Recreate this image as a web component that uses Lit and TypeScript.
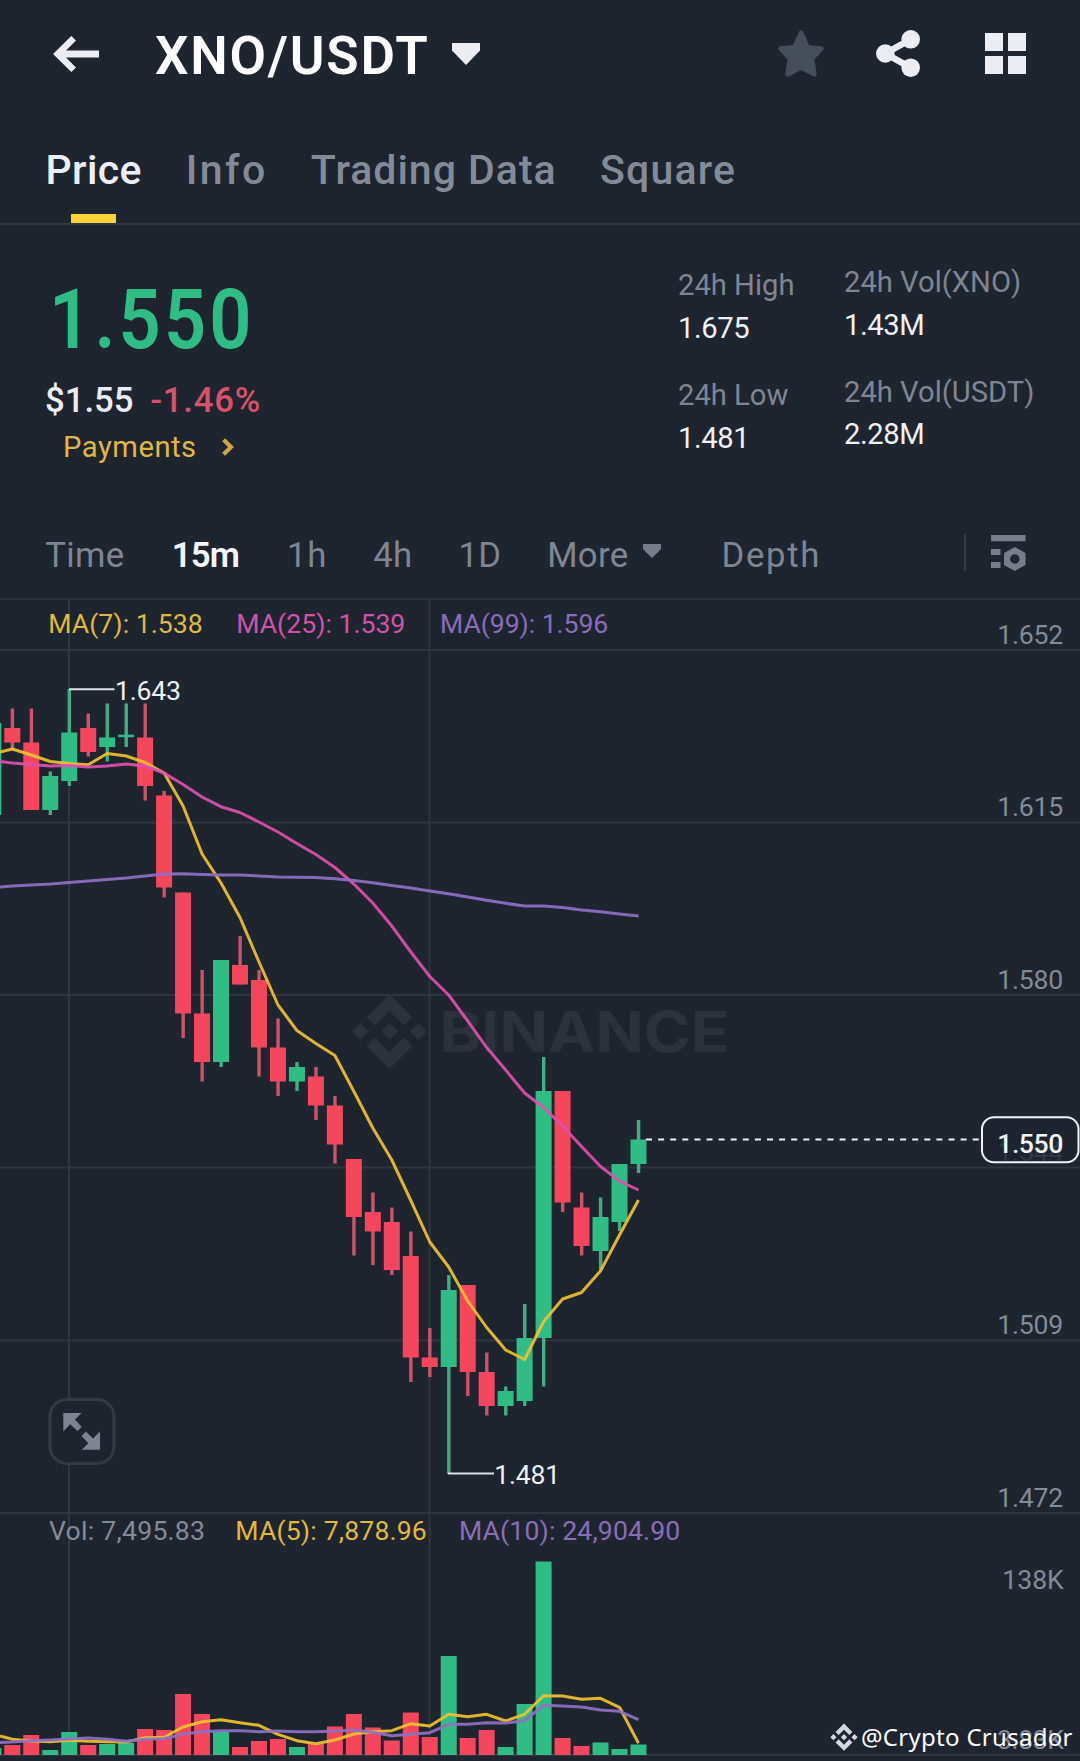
import { LitElement, html, svg, css } from "lit";
import { customElement } from "lit/decorators.js";
import { classMap } from "lit/directives/class-map.js";

const TOP = 600;
const BOTTOM = 1755;
const STEP = 18.975;
const centerX = (i: number) => 12.3 + STEP * i;

type Candle = {
  up: boolean;
  open: number;
  close: number;
  high: number;
  low: number;
  vol: number;
};

const c = (dir: string, top: number, bottom: number, high: number, low: number, vol: number): Candle => ({
  up: dir === "u",
  open: top,
  close: bottom,
  high,
  low,
  vol,
});

/* The first candle is cut off by the left edge (index -1). */
const CANDLES: Candle[] = [
  c("u", 723, 815, 723, 815, 1748),
  c("d", 728, 742.5, 708.5, 749, 1745),
  c("d", 742.5, 810, 708.5, 810, 1735),
  c("u", 776, 810, 771.5, 815, 1750),
  c("u", 732.5, 781, 689, 786, 1732),
  c("d", 728, 752, 713.5, 756.5, 1745),
  c("u", 737.5, 747, 703.5, 761.5, 1744),
  c("u", 734.7, 737.2, 703.5, 747, 1743),
  c("d", 737.5, 786, 703.5, 800.5, 1729),
  c("d", 795.5, 887.5, 791, 897.5, 1730),
  c("d", 892.5, 1013.5, 892.5, 1038, 1694),
  c("d", 1013.5, 1062, 970, 1081.5, 1714),
  c("u", 960, 1062, 960, 1067, 1731.5),
  c("d", 965, 984.5, 936, 984.5, 1747),
  c("d", 980, 1047.5, 970, 1076.5, 1741),
  c("d", 1047.5, 1081.5, 1018.5, 1096, 1739),
  c("u", 1067, 1081.5, 1062, 1091, 1747),
  c("d", 1076.5, 1105.5, 1067, 1120, 1744),
  c("d", 1105.5, 1144.5, 1096, 1163.5, 1726.5),
  c("d", 1159, 1217, 1159, 1255.5, 1714),
  c("d", 1212, 1231.5, 1192.5, 1265, 1727.5),
  c("d", 1222, 1270, 1207.5, 1275, 1740.5),
  c("d", 1256, 1357.5, 1231.5, 1382, 1712.5),
  c("d", 1357.5, 1367, 1328, 1377, 1737),
  c("u", 1290, 1367, 1275, 1474, 1656),
  c("d", 1285, 1372, 1285, 1396, 1738),
  c("d", 1372, 1406, 1352.5, 1415.5, 1730),
  c("u", 1391, 1406, 1386.5, 1415.5, 1747),
  c("u", 1338, 1401, 1304, 1406, 1704),
  c("u", 1091, 1338, 1057, 1386.5, 1561.5),
  c("d", 1091, 1202.5, 1091, 1212, 1738),
  c("d", 1207.5, 1246, 1192.5, 1255.5, 1746),
  c("u", 1217, 1251, 1197.5, 1270, 1742.5),
  c("u", 1164, 1222, 1164, 1231, 1749),
  c("u", 1139.5, 1164, 1120, 1173, 1744.5),
];

const MA7 = [
  749, 755, 761.5, 763.5, 764.7, 753.5, 756, 762.5, 773, 806, 854, 883, 917.5, 962, 1005, 1030.5, 1043.5, 1055.5,
  1091.5, 1128, 1160, 1200.5, 1242, 1267, 1301, 1327.5, 1350, 1359.5, 1321.5, 1299, 1292.5, 1271, 1235, 1200,
];
const MA25 = [
  763, 764.5, 766, 765.5, 767, 766, 764, 766, 773, 784.5, 797, 806.7, 812.5, 822, 832, 843.5, 854.5, 867.5, 884, 903,
  926, 952, 976.5, 995, 1021, 1047.5, 1070, 1093, 1107.5, 1126, 1146.5, 1166.5, 1181, 1190,
];
const MA99 = [
  886, 885, 884, 882.5, 881, 879.5, 878, 876, 874, 873.7, 874.5, 875, 875, 876, 877, 877.3, 877.5, 878.7, 880.5, 882.8,
  885.5, 888, 891, 893.8, 897, 900.3, 903.3, 906, 906, 907.5, 910, 911.8, 914, 916,
];
const VOL_MA5 = [
  598, 603, 605, 601, 604, 605, 606, 593, 592, 561, 545, 539, 548, 556, 583, 602, 611, 600, 582, 575, 572, 551, 558,
  523, 530, 523, 543, 523, 467, 468, 478, 475, 502, 610,
].map((v) => 1540 + v / 3);
const VOL_MA10 = [
  606, 602, 600, 597, 594, 598, 604, 598, 596, 582, 575, 572, 572, 575, 573, 575, 575, 573, 570, 577, 587, 583, 578,
  553, 553, 548, 549, 542, 496, 498, 501, 510, 514, 539,
].map((v) => 1540 + v / 3);

const line = (first: number, ys: number[]) => `0,${first} ` + ys.map((y, i) => `${centerX(i).toFixed(1)},${y.toFixed(1)}`).join(" ");

const LOGO =
  "M38.73 53.2l24.59-24.58 24.6 24.6 14.3-14.31L63.32 0 24.42 38.9zM0 63.31l14.3-14.31 14.31 14.31-14.31 14.3zM38.73 73.41l24.59 24.59 24.6-24.6 14.31 14.29-38.91 38.92-38.9-38.89zM98 63.31l14.3-14.31 14.31 14.31-14.31 14.31zM77.83 63.3L63.32 48.79 48.81 63.3 63.32 77.81z";

const label = (cls: string, x: number, y: number, length: number, text: string) =>
  svg`<text class=${cls} x=${x} y=${y} textLength=${length}>${text}</text>`;

@customElement("price-chart")
export class PriceChart extends LitElement {
  static styles = css`
    :host { display: block; }
    svg { display: block; width: 100%; height: 1161px; overflow: hidden; }
    text { font-family: Roboto, "Liberation Sans", sans-serif; font-size: 26.6px; white-space: pre; }
    .grid { stroke: #2f3641; stroke-width: 2; }
    .up { fill: #2fbd85; }
    .down { fill: #f6465d; }
    .wick-up { fill: #43ad82; }
    .wick-down { fill: #cd526a; }
    .ma { fill: none; stroke-width: 3; stroke-linejoin: round; opacity: 0.92; }
    .stroke-yellow { stroke: #eec12f; }
    .stroke-pink { stroke: #e04fae; }
    .stroke-purple { stroke: #8f70c4; }
    .yellow { fill: #dfb940; }
    .pink { fill: #cf54a9; }
    .purple { fill: #8a6db8; }
    .muted { fill: #848a96; }
    .light { fill: #eef0f5; }
    .callout { stroke: #dcdfe6; stroke-width: 2; }
    .dash { stroke: #eef0f5; stroke-width: 2; stroke-dasharray: 6 6.1; }
    .mark { fill: #2b323c; }
    .brand { font-family: Inter, sans-serif; font-size: 56.8px; font-weight: 700; fill: #2b323c; }
    .tag { fill: #1f252f; fill-opacity: 0.82; stroke: #f1f2f6; stroke-width: 2; }
    .current { font-weight: 500; fill: #f4f5f9; }
    .expand { fill: #1f252f; stroke: #343a45; stroke-width: 3; }
    .arrows { fill: #7d8492; }
    .credit { font-family: "Noto Sans", sans-serif; font-size: 24px; font-weight: 450; fill: #ffffff; }
    .credit-logo { fill: #d5d8de; }
  `;

  render() {
    return svg`
      <svg viewBox="0 ${TOP} 1080 1161" preserveAspectRatio="none">
        ${[650, 822.5, 995, 1167.5, 1340.5, 1513, BOTTOM].map(
          (y) => svg`<line class="grid" x1="0" x2="1080" y1=${y} y2=${y}></line>`
        )}
        ${[69, 429.5].map((x) => svg`<line class="grid" x1=${x} x2=${x} y1=${TOP} y2=${BOTTOM}></line>`)}

        <path class="mark" transform="translate(352 994) scale(0.592)" d=${LOGO}></path>
        <text class="brand" x="439.5" y="1052" textLength="290" lengthAdjust="spacingAndGlyphs">BINANCE</text>

        ${CANDLES.map((k, n) => {
          const x = centerX(n - 1);
          return svg`
            <rect class=${k.up ? "wick-up" : "wick-down"} x=${x - 1.6} y=${k.high} width="3.4" height=${k.low - k.high}></rect>
            <rect class=${k.up ? "up" : "down"} x=${x - 8} y=${k.open} width="16" height=${k.close - k.open}></rect>
            <rect class=${k.up ? "up" : "down"} x=${x - 8} y=${k.vol} width="16" height=${BOTTOM - k.vol}></rect>`;
        })}

        <polyline class="ma stroke-yellow" points=${line(752, MA7)}></polyline>
        <polyline class="ma stroke-pink" points=${line(761.5, MA25)}></polyline>
        <polyline class="ma stroke-purple" points=${line(887, MA99)}></polyline>
        <polyline class="ma stroke-yellow" points=${line(1736, VOL_MA5)}></polyline>
        <polyline class="ma stroke-purple" points=${line(1742.5, VOL_MA10)}></polyline>

        ${label("yellow", 48.3, 633, 154.5, "MA(7): 1.538")}
        ${label("pink", 236.3, 633, 169, "MA(25): 1.539")}
        ${label("purple", 440, 633, 168.3, "MA(99): 1.596")}
        ${label("muted", 49, 1540, 156, "Vol: 7,495.83")}
        ${label("yellow", 235.3, 1540, 191.5, "MA(5): 7,878.96")}
        ${label("purple", 459, 1540, 221.3, "MA(10): 24,904.90")}

        ${label("muted", 997.3, 643.8, 66, "1.652")}
        ${label("muted", 997.3, 816, 66, "1.615")}
        ${label("muted", 997.3, 988.8, 66, "1.580")}
        ${label("muted", 997.3, 1161.3, 66, "1.544")}
        ${label("muted", 997.3, 1334, 66, "1.509")}
        ${label("muted", 997.3, 1506.5, 66, "1.472")}
        ${label("muted", 1002.3, 1589, 61.5, "138K")}
        ${label("muted", 997, 1748.5, 67, "3.83K")}

        <line class="callout" x1="69" x2="114.5" y1="689.3" y2="689.3"></line>
        ${label("light", 115, 699.8, 66, "1.643")}
        <line class="callout" x1="448" x2="494" y1="1473.5" y2="1473.5"></line>
        ${label("light", 494.3, 1484, 66, "1.481")}

        <line class="dash" x1="646" x2="981" y1="1139.5" y2="1139.5"></line>
        <rect class="tag" x="982" y="1117.3" width="96.5" height="45" rx="12"></rect>
        ${label("current", 997.3, 1153, 66, "1.550")}

        <rect class="expand" x="50" y="1399.5" width="64" height="64" rx="17"></rect>
        <path class="arrows" d="M63.3 1413H81.5L75 1419.5L81.7 1427L77.5 1431L70.2 1424.3L63.3 1431.5ZM100 1449.8H81.8L88.3 1443.3L81.6 1436L85.8 1431.6L93.1 1438.5L100 1431.6Z"></path>

        <path class="credit-logo" transform="translate(830.3 1723.5) scale(0.216)" d=${LOGO}></path>
        ${label("credit", 861, 1746, 211.5, "@Crypto Crusador")}
      </svg>
    `;
  }
}

const TABS = [
  { name: "Price", cls: "price" },
  { name: "Info", cls: "info" },
  { name: "Trading Data", cls: "trading" },
  { name: "Square", cls: "square" },
];

const STATS = [
  [
    ["24h High", "1.675"],
    ["24h Low", "1.481"],
  ],
  [
    ["24h Vol(XNO)", "1.43M"],
    ["24h Vol(USDT)", "2.28M"],
  ],
];

@customElement("app-root")
export class AppRoot extends LitElement {
  static styles = css`
    :host {
      display: block;
      width: 1080px;
      height: 1761px;
      overflow: hidden;
      background: #1f252f;
      color: #eaecf2;
      font-family: Roboto, "Liberation Sans", sans-serif;
      white-space: nowrap;
    }
    svg { display: block; flex: none; }

    .header { display: flex; align-items: center; height: 112px; padding: 0 54.5px 0 53px; box-sizing: border-box; }
    .header svg { margin-bottom: 5px; fill: #ebedf3; }
    .title { margin: 0 22.5px 0 56px; font-size: 53px; font-weight: 560; letter-spacing: 1.75px; line-height: 112px; color: #ffffff; }
    .header .star { margin-left: auto; fill: #464d5b; }
    .header .share { margin-left: 52px; }
    .header .apps { margin-left: 65px; }

    .tabs { display: flex; gap: 43.3px; height: 113px; padding: 28px 0 0 45.5px; box-sizing: border-box; border-bottom: 2px solid #2f3640; }
    .tab { display: flex; flex-direction: column; align-items: center; font-size: 41px; font-weight: 460; line-height: 60px; color: #858a97; }
    .tab.active { color: #eceef5; }
    .tab.price { letter-spacing: 0.4px; }
    .tab.info { letter-spacing: 2.4px; margin-left: 0.5px; }
    .tab.trading { letter-spacing: 1px; }
    .tab.square { letter-spacing: 1.2px; }
    .bar { width: 45px; height: 9px; margin-top: 14px; background: #f8d33a; }

    .summary { display: flex; height: 287px; }
    .quote { width: 678px; padding-top: 49.5px; box-sizing: border-box; }
    .last { padding-left: 49px; font-size: 84px; font-weight: 600; line-height: 90px; }
    .last span { display: inline-block; color: #2fbd85; letter-spacing: 3.6px; transform: scaleX(0.88); transform-origin: 0 50%; }
    .change { display: flex; gap: 16.8px; margin-top: 13.5px; padding-left: 45px; font-size: 34.7px; font-weight: 500; line-height: 44px; }
    .pct { color: #d8516a; letter-spacing: 0.77px; }
    .pay { display: flex; align-items: center; gap: 25px; margin-top: 5px; padding-left: 63px; font-size: 29.2px; line-height: 40px; letter-spacing: 0.52px; color: #dfb748; }
    .stats { width: 166px; padding-top: 42px; box-sizing: border-box; font-size: 29.2px; line-height: 36px; }
    .stats.wide { width: 236px; padding-top: 39px; }
    .stat { display: flex; flex-direction: column; gap: 7px; margin-bottom: 31px; }
    .stats.wide .stat { gap: 6.5px; }
    .name { color: #7f8592; }
    .value { letter-spacing: -0.4px; color: #f0f1f6; font-weight: 430; }

    .intervals { display: flex; align-items: center; gap: 46px; height: 88px; padding: 0 54.5px 0 45.3px; box-sizing: border-box; border-bottom: 2px solid #2d343f; font-size: 34.7px; color: #7f8592; letter-spacing: 0.3px; }
    .now { font-weight: 600; color: #f4f5fa; letter-spacing: -0.8px; margin: 0 2px 0 1.2px; }
    .hour { letter-spacing: 0.8px; }
    .more { display: flex; align-items: center; gap: 15px; margin-right: 14px; }
    .more svg { margin-bottom: 9px; }
    .depth { letter-spacing: 1.74px; }
    .tools { display: flex; align-items: center; gap: 25px; margin-left: auto; }
    .tools svg { margin-bottom: 5px; }
    .rule { width: 2px; height: 37px; margin-bottom: 5px; background: #363c48; }
  `;

  render() {
    return html`
      <header class="header">
        <svg width="46" height="36" viewBox="0 0 46 36">
          <path d="M0 18L18.3 0L23 4.6L13 14.5H46V21.5H13L23 31.4L18.3 36Z"></path>
        </svg>
        <h1 class="title">XNO/USDT</h1>
        <svg width="28" height="22" viewBox="0 0 28 22"><path d="M0 0H28V7.5L14 22L0 7.5Z"></path></svg>
        <svg class="star" width="46" height="47" viewBox="0 0 46 47">
          <path d="M20.8 1.8Q23 -1.4 25.2 1.8L30.5 14Q31 15 32 15.2L43.5 16.3Q47.3 17.2 44.8 20.4L37.3 28.4Q36.4 29.4 36.6 30.6L38.7 43.4Q38.5 47.6 34.8 46.3L24 40.4Q23 39.9 22 40.4L11.2 46.3Q7.5 47.6 7.3 43.4L9.4 30.6Q9.6 29.4 8.7 28.4L1.2 20.4Q-1.3 17.2 2.5 16.3L14 15.2Q15 15 15.5 14Z"></path>
        </svg>
        <svg class="share" width="44" height="47" viewBox="0 0 44 47">
          <circle cx="9.3" cy="23.5" r="9.3"></circle>
          <circle cx="34.7" cy="9.3" r="9.3"></circle>
          <circle cx="34.7" cy="37.7" r="9.3"></circle>
          <path d="M34.7 9.3L9.3 23.5L34.7 37.7" fill="none" stroke="#ebedf3" stroke-width="6.5"></path>
        </svg>
        <svg class="apps" width="41" height="41" viewBox="0 0 41 41">
          <path d="M0 0H18V18H0ZM23 0H41V18H23ZM0 23H18V41H0ZM23 23H41V41H23Z"></path>
        </svg>
      </header>

      <nav class="tabs">
        ${TABS.map(
          (t, i) => html`<div class=${classMap({ tab: true, [t.cls]: true, active: i === 0 })}>
            <span>${t.name}</span>${i === 0 ? html`<div class="bar"></div>` : ""}
          </div>`
        )}
      </nav>

      <section class="summary">
        <div class="quote">
          <div class="last"><span>1.550</span></div>
          <div class="change"><span>$1.55</span><span class="pct">-1.46%</span></div>
          <div class="pay">
            <span>Payments</span>
            <svg width="12" height="18" viewBox="0 0 12 18">
              <path d="M1.6 1.8L9 9L1.6 16.2" fill="none" stroke="#cfa93f" stroke-width="4.2"></path>
            </svg>
          </div>
        </div>
        ${STATS.map(
          (col, i) => html`<div class=${classMap({ stats: true, wide: i === 1 })}>
            ${col.map(
              ([name, value]) => html`<div class="stat"><span class="name">${name}</span><span class="value">${value}</span></div>`
            )}
          </div>`
        )}
      </section>

      <nav class="intervals">
        <span>Time</span>
        <span class="now">15m</span>
        <span class="hour">1h</span>
        <span>4h</span>
        <span>1D</span>
        <span class="more">
          More
          <svg width="18" height="14" viewBox="0 0 18 14"><path fill="#767d8b" d="M0 0H18V5L9 14L0 5Z"></path></svg>
        </span>
        <span class="depth">Depth</span>
        <span class="tools">
          <i class="rule"></i>
          <svg width="35" height="36" viewBox="0 0 35 36">
            <path
              fill="#767d8b"
              fill-rule="evenodd"
              d="M0 0H34.5V6.3H0ZM0 14H9.5V20H0ZM0 27H9.5V33H0ZM23.8 12L34.5 18V30L23.8 36L13 30V18ZM23.8 19.3A4.7 4.7 0 1 0 23.8 28.7A4.7 4.7 0 1 0 23.8 19.3Z"
            ></path>
          </svg>
        </span>
      </nav>

      <price-chart></price-chart>
    `;
  }
}
